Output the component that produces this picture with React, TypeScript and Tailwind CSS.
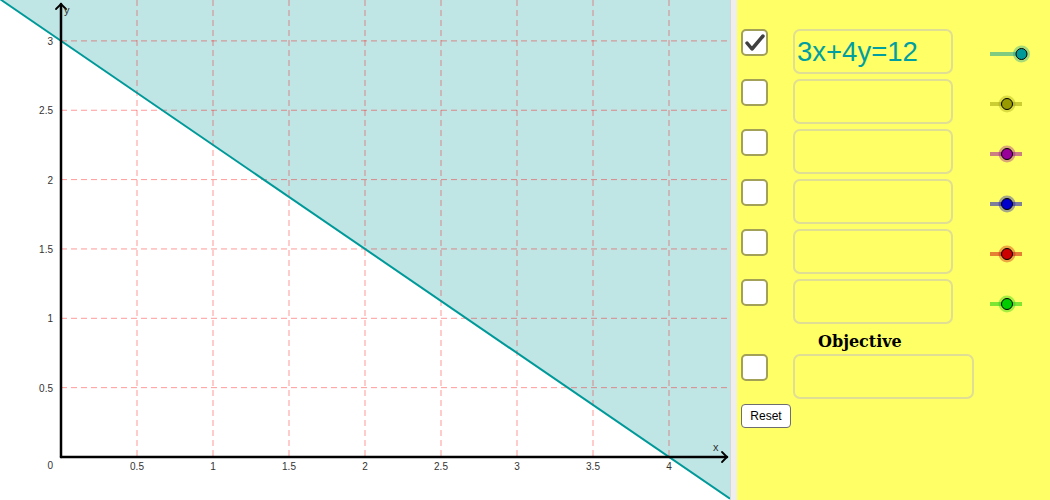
import React from "react";

// pixel mapping of the graphics view
const ox = 61;
const oy = 457;
const ux = 152; // px per unit on x
const uy = 138.7; // px per unit on y

const px = (x: number) => ox + x * ux;
const py = (y: number) => oy - y * uy;

const xTicks = [0.5, 1, 1.5, 2, 2.5, 3, 3.5, 4];
const yTicks = [0.5, 1, 1.5, 2, 2.5, 3];

type SliderDef = { color: string; value: number };

const sliders: SliderDef[] = [
  { color: "#009999", value: 1 },
  { color: "#999900", value: 0.5 },
  { color: "#990099", value: 0.5 },
  { color: "#0000cc", value: 0.5 },
  { color: "#cc0000", value: 0.5 },
  { color: "#00cc00", value: 0.5 },
];

const Graph = () => {
  // line 3x + 4y = 12 across the whole view
  const yAt = (sx: number) => {
    const x = (sx - ox) / ux;
    return py((12 - 3 * x) / 4);
  };
  const y0 = yAt(0);
  const y1 = yAt(730);

  return (
    <svg width={730} height={500} className="block bg-white">
      <polygon
        points={`0,${y0} 730,${y1} 730,0 0,0`}
        fill="#009999"
        fillOpacity={0.25}
      />
      {xTicks.map((t) => (
        <line
          key={`gx${t}`}
          x1={px(t)}
          x2={px(t)}
          y1={0}
          y2={oy}
          stroke="#ff0000"
          strokeOpacity={0.4}
          strokeDasharray="6 4"
          strokeWidth={1}
        />
      ))}
      {yTicks.map((t) => (
        <line
          key={`gy${t}`}
          x1={ox}
          x2={730}
          y1={py(t)}
          y2={py(t)}
          stroke="#ff0000"
          strokeOpacity={0.4}
          strokeDasharray="6 4"
          strokeWidth={1}
        />
      ))}
      <line x1={0} y1={y0} x2={730} y2={y1} stroke="#009999" strokeWidth={2} />

      {/* axes */}
      <g stroke="#000" strokeWidth={2.5} fill="none" strokeLinecap="round">
        <line x1={ox} y1={oy} x2={ox} y2={4} />
        <polyline points={`${ox - 5},9 ${ox},4 ${ox + 5},9`} strokeWidth={1.8} />
        <line x1={ox} y1={oy} x2={727} y2={oy} />
        <polyline points={`722,${oy - 5} 727,${oy} 722,${oy + 5}`} strokeWidth={1.8} />
      </g>

      <g
        fontFamily="'Liberation Sans', Arial, sans-serif"
        fontSize={10}
        fill="#333"
      >
        {yTicks.map((t) => (
          <text key={`ly${t}`} x={53} y={py(t) + 4} textAnchor="end">
            {t}
          </text>
        ))}
        <text x={53} y={469} textAnchor="end">
          0
        </text>
        {xTicks.map((t) => (
          <text key={`lx${t}`} x={px(t)} y={470} textAnchor="middle">
            {t}
          </text>
        ))}
        <text x={64} y={14} fontSize={11}>
          y
        </text>
        <text x={713} y={451} fontSize={11}>
          x
        </text>
      </g>
    </svg>
  );
};

const Checkbox = ({ checked }: { checked?: boolean }) => (
  <div className="w-[27px] h-[27px] shrink-0 rounded-[5px] border-2 border-[#a3a157] bg-white flex items-center justify-center">
    {checked && (
      <svg width={20} height={18} viewBox="0 0 20 18">
        <polyline
          points="2,9 7,15 18,2"
          fill="none"
          stroke="#404040"
          strokeWidth={3.5}
          strokeLinecap="round"
          strokeLinejoin="round"
        />
      </svg>
    )}
  </div>
);

const Slider = ({ color, value }: SliderDef) => {
  const x = 2 + value * 29;
  return (
    <svg width={42} height={20} className="block">
      <line
        x1={0}
        y1={10}
        x2={32}
        y2={10}
        stroke={color}
        strokeOpacity={0.5}
        strokeWidth={4}
      />
      <circle cx={x + 0.5} cy={10} r={8.5} fill={color} fillOpacity={0.35} />
      <circle cx={x + 0.5} cy={10} r={5.5} fill={color} stroke="#000" strokeWidth={1} />
    </svg>
  );
};

export default function App() {
  return (
    <div className="flex w-[1050px] h-[500px] overflow-hidden font-['Liberation_Sans',Arial,sans-serif]">
      <Graph />
      <div className="w-[7px] h-full bg-[#eeeeee] border-l border-[#d6d6d6]" />
      <div className="flex-1 h-full bg-[#ffff66] pl-[4px] pt-[29px] flex flex-col">
        {sliders.map((s, i) => (
          <div key={i} className="flex items-start h-[50px]">
            <Checkbox checked={i === 0} />
            <div className="ml-[25px] w-[160px] h-[45px] rounded-[7px] border-2 border-[#e0dd95] flex items-center pl-[2px]">
              {i === 0 && (
                <span className="text-[27.5px] leading-none text-[#009ea0] pt-[1px]">
                  3x+4y=12
                </span>
              )}
            </div>
            <div className="ml-[37px] mt-[15px]">
              <Slider {...s} />
            </div>
          </div>
        ))}
        <div className="h-[25px] pl-[77px] flex items-center">
          <span className="font-['DejaVu_Serif',serif] font-bold text-[16px] text-black">
            Objective
          </span>
        </div>
        <div className="flex items-start">
          <Checkbox />
          <div className="ml-[25px] w-[181px] h-[45px] rounded-[7px] border-2 border-[#e0dd95]" />
        </div>
        <button className="mt-[5px] w-[50px] h-[24px] rounded-[4px] border-[1.5px] border-[#6e6e6e] bg-white text-[12px] text-black flex items-center justify-center">
          Reset
        </button>
      </div>
    </div>
  );
}
